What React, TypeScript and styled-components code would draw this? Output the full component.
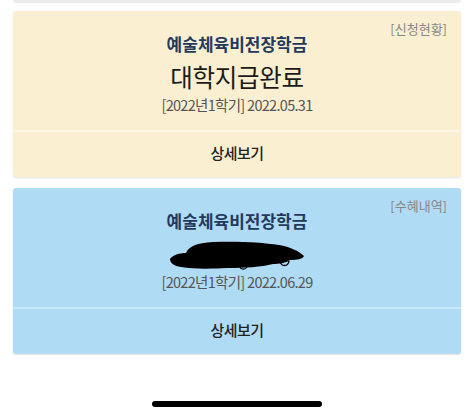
import React from "react";
import styled, { createGlobalStyle } from "styled-components";

const GlobalStyle = createGlobalStyle`
  html, body {
    margin: 0;
    padding: 0;
    background: #fff;
    font-family: "Noto Sans CJK KR", "Noto Sans", sans-serif;
  }
`;

type Tone = "cream" | "blue";

const palette: Record<Tone, { bg: string; line: string }> = {
  cream: { bg: "#faefd1", line: "#fdf6e4" },
  blue: { bg: "#b0dbf5", line: "#c9e8fa" },
};

const Page = styled.div`
  width: 474px;
  height: 415px;
  overflow: hidden;
  display: flex;
  flex-direction: column;
  padding: 0 13px;
  box-sizing: border-box;
`;

const PrevCardTail = styled.div`
  height: 3px;
  background: #ececec;
  border-radius: 0 0 3px 3px;
  margin-bottom: 8px;
`;

const Card = styled.div<{ tone: Tone }>`
  position: relative;
  background: ${(p) => palette[p.tone].bg};
  border-radius: 3px;
  box-shadow: 0 1px 2px rgba(0, 0, 0, 0.12);
  margin-bottom: 11px;
`;

const Body = styled.div`
  height: 119px;
  box-sizing: border-box;
  padding-top: 22px;
  display: flex;
  flex-direction: column;
  align-items: center;
`;

const Tag = styled.span`
  position: absolute;
  top: 9px;
  right: 14px;
  font-size: 13px;
  line-height: 18px;
  color: #878787;
  letter-spacing: 0;
`;

const Title = styled.div`
  font-size: 17px;
  line-height: 22px;
  font-weight: 700;
  color: #233a5e;
  letter-spacing: 0;
`;

const Status = styled.div`
  margin-top: 7px;
  height: 30px;
  font-size: 24.5px;
  line-height: 30px;
  color: #1a1a1a;
  letter-spacing: -0.3px;
  display: flex;
  align-items: center;
`;

const Period = styled.div`
  margin-top: 2px;
  font-size: 14.5px;
  line-height: 22px;
  color: #555;
  letter-spacing: -0.7px;
`;

const DetailButton = styled.button<{ tone: Tone }>`
  display: block;
  width: 100%;
  height: 47px;
  border: none;
  border-top: 2px solid ${(p) => palette[p.tone].line};
  background: transparent;
  font-family: inherit;
  font-size: 15px;
  font-weight: 500;
  color: #222;
  letter-spacing: -0.6px;
  cursor: pointer;
  padding: 0 0 4px;
`;

const HomeIndicator = styled.div`
  margin: auto auto 8px;
  width: 170px;
  height: 6px;
  border-radius: 3px;
  background: #000;
`;

const Redaction = () => (
  <svg width="136" height="30" viewBox="0 0 136 30" style={{ marginTop: 3 }}>
    <path
      d="M1 18 C4 14 10 12 17 12 C20 5 28 2 44 1 C66 0 92 1 110 4 C121 6 130 10 135 15 C134 18 128 19 121 19 C117 22 110 23 104 23 C92 26 76 27 58 27 C40 28 24 28 12 26 C5 25 1 22 1 18 Z"
      fill="#000"
    />
    <path d="M111 20 C112 26 119 26 120 20" stroke="#000" strokeWidth="1.5" fill="none" />
    <path d="M70 25 C72 29 76 29 78 26" stroke="#000" strokeWidth="1.2" fill="none" />
  </svg>
);

interface ScholarshipProps {
  tone: Tone;
  tag: string;
  title: string;
  status?: string;
  period: string;
}

const ScholarshipCard = (p: ScholarshipProps) => (
  <Card tone={p.tone}>
    <Tag>{p.tag}</Tag>
    <Body>
      <Title>{p.title}</Title>
      <Status>{p.status ?? <Redaction />}</Status>
      <Period>{p.period}</Period>
    </Body>
    <DetailButton tone={p.tone}>상세보기</DetailButton>
  </Card>
);

const App = () => {
  return (
    <>
      <GlobalStyle />
      <Page>
        <PrevCardTail />
        <ScholarshipCard
          tone="cream"
          tag="[신청현황]"
          title="예술체육비전장학금"
          status="대학지급완료"
          period="[2022년1학기] 2022.05.31"
        />
        <ScholarshipCard
          tone="blue"
          tag="[수혜내역]"
          title="예술체육비전장학금"
          period="[2022년1학기] 2022.06.29"
        />
        <HomeIndicator />
      </Page>
    </>
  );
};

export default App;
